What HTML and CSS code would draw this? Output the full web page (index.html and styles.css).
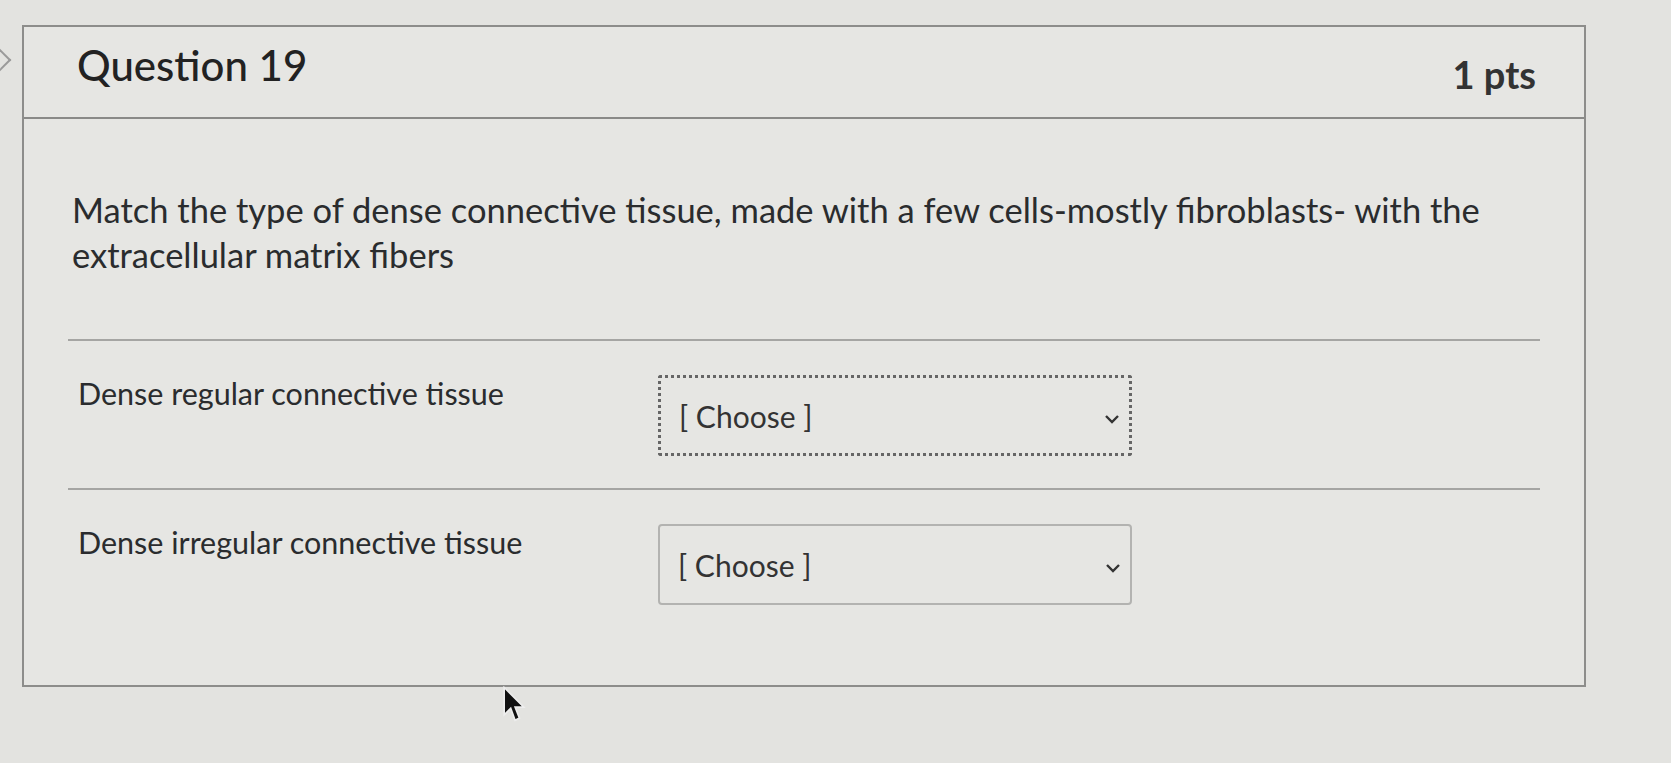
FILE: index.html
```html
<!DOCTYPE html>
<html lang="en">
<head>
    <meta charset="UTF-8">
    <meta name="viewport" content="width=device-width, initial-scale=1.0">
    <title>Question 19</title>
    <link rel="stylesheet" href="styles.css">
</head>
<body>
    <div class="edge-arrow"></div>

    <div class="question">
        <div class="question-header">
            <h2>Question 19</h2>
            <span class="points">1 pts</span>
        </div>

        <div class="question-body">
            <p class="question-text">Match the type of dense connective tissue, made with a few cells-mostly fibroblasts- with the extracellular matrix fibers</p>

            <div class="match-row">
                <div class="match-label">Dense regular connective tissue</div>
                <div class="select focused">
                    <span>[ Choose ]</span>
                    <svg class="chevron" width="16" height="10" viewBox="0 0 16 10"><path d="M2 2 L8 8 L14 2" fill="none" stroke="#333" stroke-width="2.4"/></svg>
                </div>
            </div>

            <div class="match-row">
                <div class="match-label">Dense irregular connective tissue</div>
                <div class="select">
                    <span>[ Choose ]</span>
                    <svg class="chevron" width="16" height="10" viewBox="0 0 16 10"><path d="M2 2 L8 8 L14 2" fill="none" stroke="#333" stroke-width="2.4"/></svg>
                </div>
            </div>
        </div>
    </div>

    <svg class="cursor" width="24" height="38" viewBox="0 0 22 34">
        <path d="M2 1 L2 26 L8 20 L12 31 L16 29 L12 19 L20 19 Z" fill="#111" stroke="#eee" stroke-width="1.5"/>
    </svg>
</body>
</html>
```

FILE: styles.css
```css
body {
    margin: 0;
    padding: 25px 0 0 22px;
    background-color: #e3e3e0;
    font-family: Lato, "Open Sans", sans-serif;
    color: #2a2c2e;
    position: relative;
    height: 738px;
    overflow: hidden;
}
.edge-arrow {
    position: absolute;
    left: -8px;
    top: 52px;
    width: 14px;
    height: 14px;
    border-top: 2px solid #9a9a9a;
    border-right: 2px solid #9a9a9a;
    transform: rotate(45deg);
}
.question {
    width: 1560px;
    border: 2px solid #8d8d8b;
    background-color: #e6e6e3;
}
.question-header {
    display: flex;
    justify-content: space-between;
    align-items: center;
    height: 90px;
    padding: 0 48px 0 53px;
    border-bottom: 2px solid #8a8a88;
}
.question-header h2 {
    margin: 0 0 14px 0;
    font-size: 42px;
    font-weight: 500;
    color: #222;
}
.points {
    font-size: 38px;
    font-weight: 700;
    color: #333;
    margin-top: 4px;
}
.question-body {
    padding: 68px 44px 80px 44px;
}
.question-text {
    margin: 0 0 62px 4px;
    font-size: 34.5px;
    line-height: 45px;
    padding-right: 60px;
}
.match-row {
    display: flex;
    align-items: flex-start;
    border-top: 2px solid #a5a5a3;
    padding-top: 34px;
}
.match-row + .match-row {
    margin-top: 32px;
}
.match-label {
    width: 580px;
    padding-left: 10px;
    font-size: 30.5px;
    line-height: 36px;
}
.select {
    width: 474px;
    height: 81px;
    box-sizing: border-box;
    display: flex;
    align-items: center;
    justify-content: space-between;
    padding: 0 9px 0 18px;
    border: 2px solid #b3b3b1;
    border-radius: 4px;
    font-size: 30px;
    color: #333;
}
.select.focused {
    border: 3px dotted #666;
    border-radius: 3px;
}
.chevron {
    margin-top: 6px;
}
.cursor {
    position: absolute;
    left: 502px;
    top: 686px;
}
```
